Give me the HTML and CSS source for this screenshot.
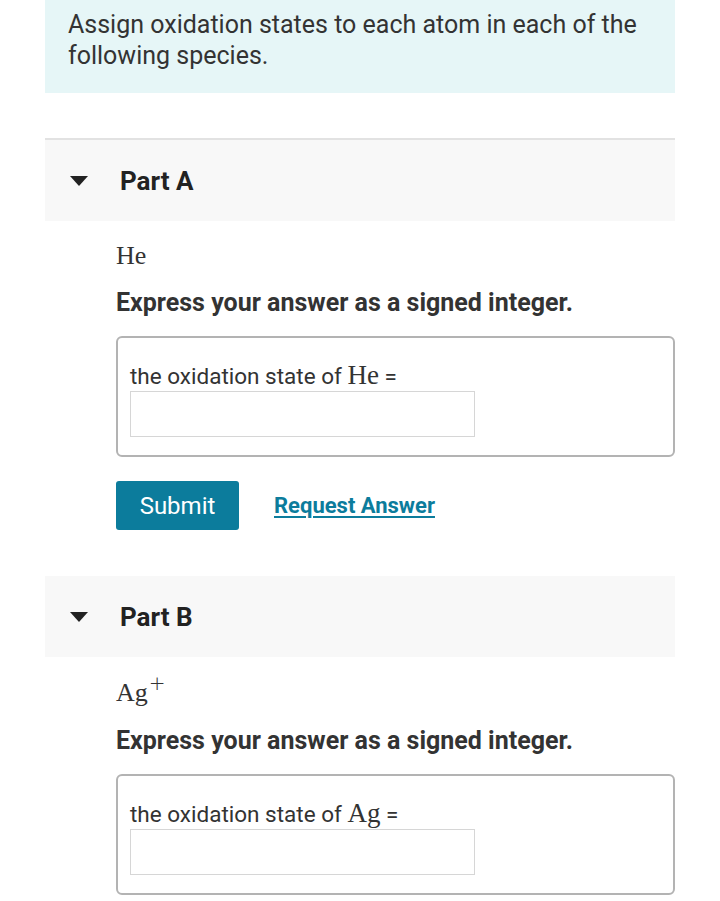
FILE: index.html
```html
<!DOCTYPE html>
<html>
<head>
<meta charset="utf-8">
<link rel="stylesheet" href="styles.css">
</head>
<body>
<div class="page">
  <div class="intro">Assign oxidation states to each atom in each of the following species.</div>
  <div class="divider"></div>

  <section class="part">
    <div class="part-head">
      <span class="caret"></span>
      <span class="part-title">Part A</span>
    </div>
    <div class="part-body">
      <div class="species">He</div>
      <div class="instr">Express your answer as a signed integer.</div>
      <div class="answer">
        <div class="label">the oxidation state of <span class="math">He</span> =</div>
        <div class="input"></div>
      </div>
      <div class="actions">
        <button class="submit">Submit</button>
        <a class="request">Request Answer</a>
      </div>
    </div>
  </section>

  <section class="part part-b">
    <div class="part-head">
      <span class="caret"></span>
      <span class="part-title">Part B</span>
    </div>
    <div class="part-body">
      <div class="species species-b">Ag<sup class="sup">+</sup></div>
      <div class="instr">Express your answer as a signed integer.</div>
      <div class="answer">
        <div class="label">the oxidation state of <span class="math">Ag</span> =</div>
        <div class="input"></div>
      </div>
    </div>
  </section>
</div>
</body>
</html>
```

FILE: styles.css
```css
html, body {
  margin: 0;
  padding: 0;
  background: #fff;
}
body {
  font-family: Roboto, "Liberation Sans", sans-serif;
  color: #333;
}
.page {
  margin: 0 45px;
}
.intro {
  background: #e6f6f7;
  padding: 9px 23px 22px 23px;
  font-size: 25px;
  line-height: 31px;
  color: #333;
}
.divider {
  height: 2px;
  background: #e2e2e2;
  margin-top: 45px;
}
.part-head {
  background: #f8f8f8;
  height: 81px;
  display: flex;
  align-items: center;
}
.caret {
  width: 0;
  height: 0;
  border-left: 9px solid transparent;
  border-right: 9px solid transparent;
  border-top: 10px solid #222;
  margin-left: 25px;
  margin-right: 32px;
}
.part-title {
  font-weight: 700;
  font-size: 26px;
  color: #222;
}
.part-body {
  padding-left: 71px;
}
.species {
  font-family: "Liberation Serif", serif;
  font-size: 26px;
  margin-top: 20px;
  line-height: 30px;
  color: #333;
}
.species-b {
  margin-top: 21px;
}
.sup {
  font-family: "DejaVu Sans", sans-serif;
  font-weight: 300;
  font-size: 20px;
  vertical-align: 11px;
  line-height: 0;
  margin-left: 1px;
}
.instr {
  font-weight: 700;
  font-size: 25px;
  color: #333;
  margin-top: 17px;
  line-height: 30px;
}
.species-b + .instr {
  margin-top: 18px;
}
.answer {
  margin-top: 18px;
  border: 2px solid #b3b3b3;
  border-radius: 6px;
  padding: 23px 12px 18px 12px;
}
.label {
  font-size: 22.5px;
  line-height: 28px;
  color: #333;
}
.math {
  font-family: "Liberation Serif", serif;
  font-size: 27px;
}
.input {
  width: 343px;
  height: 44px;
  border: 1px solid #d6d6d6;
  margin-top: 1px;
}
.actions {
  display: flex;
  align-items: center;
  margin-top: 24px;
  gap: 35px;
}
.submit {
  background: #0c7c9c;
  color: #fff;
  border: none;
  border-radius: 3px;
  width: 123px;
  height: 49px;
  font-family: Roboto, "Liberation Sans", sans-serif;
  font-size: 24px;
  padding: 0;
}
.request {
  color: #0c7c9c;
  font-weight: 700;
  font-size: 22px;
  text-decoration: underline;
  text-decoration-thickness: 2px;
  text-underline-offset: 3px;
}
.part-b {
  margin-top: 46px;
}
```
